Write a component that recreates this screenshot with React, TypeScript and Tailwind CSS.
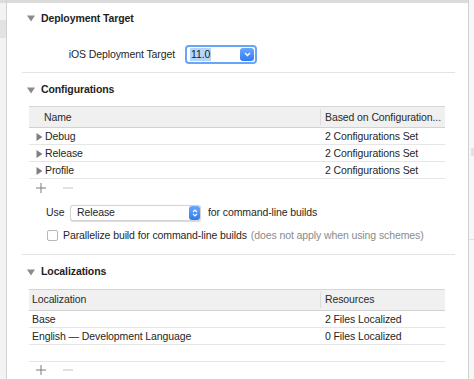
import React from "react";

const font = { fontFamily: '"Liberation Sans", Arial, sans-serif' };

function Caret({ open }: { open?: boolean }) {
  return open ? (
    <svg width="8" height="7" viewBox="0 0 8 7" className="shrink-0">
      <path d="M0 0.5h8L4 6.5z" fill="#8b8b8b" />
    </svg>
  ) : (
    <svg width="7" height="8" viewBox="0 0 7 8" className="shrink-0">
      <path d="M0.5 0v8L6.5 4z" fill="#808080" />
    </svg>
  );
}

function SectionHeader({ title, className }: { title: string; className: string }) {
  return (
    <div className={`flex items-center gap-[6px] pl-[20px] pt-[2px] ${className}`}>
      <Caret open />
      <span className="text-[10.5px] font-bold tracking-[-0.1px] text-[#1e1e1e]">{title}</span>
    </div>
  );
}

function Separator() {
  return <div className="ml-[15px] mr-[13px] h-px bg-[#e3e3e3]" />;
}

function PlusMinus({ className }: { className: string }) {
  return (
    <div className={`flex items-center gap-[17px] pl-[29px] ${className}`}>
      <svg width="10" height="10" viewBox="0 0 10 10">
        <path d="M5 0v10M0 5h10" stroke="#7a7a7a" strokeWidth="1" />
      </svg>
      <svg width="10" height="10" viewBox="0 0 10 10">
        <path d="M0 5h10" stroke="#c4c4c4" strokeWidth="1" />
      </svg>
    </div>
  );
}

function HeaderCell({ children, className }: { children: React.ReactNode; className?: string }) {
  return (
    <div className={`flex items-center overflow-hidden whitespace-nowrap pt-px text-[#2a2a2a] ${className ?? ""}`}>
      {children}
    </div>
  );
}

export default function App() {
  const configs = ["Debug", "Release", "Profile"];
  const locs = [
    ["Base", "2 Files Localized"],
    ["English \u2014 Development Language", "0 Files Localized"],
    ["", ""],
  ];

  return (
    <div
      className="flex h-[379px] w-[474px] overflow-hidden bg-white text-[10.5px] tracking-[-0.1px]"
      style={font}
    >
      {/* left strip */}
      <div className="flex w-[7px] shrink-0 flex-col border-r border-[#d2d2d2] bg-[#f3f3f3]">
        <div className="h-[3px] bg-[#dcdcdc]" />
        <div className="mt-[17px] h-[18px] bg-[#e2e2e2]" />
      </div>

      {/* main */}
      <div className="flex w-[461px] shrink-0 flex-col">
        <div className="h-[3px] bg-[#dcdcdc]" />

        <SectionHeader title="Deployment Target" className="h-[30px]" />

        <div className="mt-[13px] flex h-[19px] items-center">
          <span className="w-[178px] pr-[10px] pt-px text-right text-[#262626]">iOS Deployment Target</span>
          <div className="flex h-[19px] w-[72px] items-center rounded-[4px] border-[2px] border-[#6aa4f7] bg-white pl-[3px]">
            <span className="bg-[#b5d5fb] px-px leading-[13px] text-[#1a1a1a]">11.0</span>
            <div className="ml-auto mr-[1px] flex h-[13px] w-[14px] items-center justify-center rounded-[3px] bg-gradient-to-b from-[#69a8fb] to-[#2f7af2]">
              <svg width="7" height="5" viewBox="0 0 7 5">
                <path d="M1 1l2.5 2.5L6 1" stroke="white" strokeWidth="1.3" fill="none" />
              </svg>
            </div>
          </div>
        </div>

        <div className="mt-[8px]">
          <Separator />
        </div>

        <SectionHeader title="Configurations" className="h-[33px]" />

        {/* configurations table */}
        <div className="ml-[22px] mt-[1px] w-[416px] border-t border-[#d6d6d6]">
          <div className="flex h-[21px] border-b border-[#d2d2d2] bg-[#f0f0f0]">
            <HeaderCell className="w-[291px] pl-[15px]">Name</HeaderCell>
            <div className="my-[2px] w-px bg-[#dcdcdc]" />
            <HeaderCell className="flex-1 pl-[4px]">Based on Configuration...</HeaderCell>
          </div>
          {configs.map((c) => (
            <div key={c} className="flex h-[17px] items-center border-b border-[#e6e6e6] pt-[2px] text-[#262626]">
              <div className="flex w-[292px] items-center gap-[2px] pl-[7px]">
                <Caret />
                <span>{c}</span>
              </div>
              <span className="pl-[4px]">2 Configurations Set</span>
            </div>
          ))}
        </div>

        <PlusMinus className="h-[19px]" />

        <div className="mt-[7px] flex h-[16px] items-center text-[#262626]">
          <span className="w-[63px] pl-[39px] pt-px">Use</span>
          <div className="flex h-[16px] w-[131px] items-center rounded-[3px] border border-[#d4d4d4] bg-white pl-[6px] shadow-[0_0.5px_1px_rgba(0,0,0,0.15)]">
            <span className="pt-px">Release</span>
            <div className="ml-auto flex h-[14px] w-[11px] items-center justify-center rounded-[3px] bg-gradient-to-b from-[#69a8fb] to-[#2f7af2]">
              <svg width="6" height="10" viewBox="0 0 6 10">
                <path d="M1 4l2-2 2 2M1 6l2 2 2-2" stroke="white" strokeWidth="1.1" fill="none" />
              </svg>
            </div>
          </div>
          <span className="pl-[7px] pt-px">for command-line builds</span>
        </div>

        <div className="mt-[8px] flex h-[14px] items-center">
          <div className="ml-[40px] h-[11px] w-[11px] rounded-[2px] border border-[#b8b8b8] bg-white" />
          <span className="pl-[5px] pt-px text-[#262626]">Parallelize build for command-line builds</span>
          <span className="pl-[4px] pt-px text-[#8a8a8a]">(does not apply when using schemes)</span>
        </div>

        <div className="mt-[11px]">
          <Separator />
        </div>

        <SectionHeader title="Localizations" className="h-[34px]" />

        {/* localizations table */}
        <div className="ml-[22px] mt-px w-[416px] border-t border-[#d6d6d6]">
          <div className="flex h-[21px] border-b border-[#d2d2d2] bg-[#f0f0f0]">
            <HeaderCell className="w-[291px] pl-[3px]">Localization</HeaderCell>
            <div className="my-[2px] w-px bg-[#dcdcdc]" />
            <HeaderCell className="flex-1 pl-[4px]">Resources</HeaderCell>
          </div>
          {locs.map(([a, b], i) => (
            <div key={i} className="flex h-[17px] items-center border-b border-[#e6e6e6] pt-[2px] text-[#262626]">
              <span className="w-[292px] pl-[3px]">{a}</span>
              <span className="pl-[4px]">{b}</span>
            </div>
          ))}
        </div>

        <PlusMinus className="h-[18px]" />
      </div>

      {/* right strip */}
      <div className="flex flex-1 flex-col border-l border-[#cfcfcf] bg-[#f7f7f7]">
        <div className="ml-[2px] mt-[148px] h-[8px] w-[3px] bg-[#e0e0e0]" />
        <div className="mt-[83px] h-px bg-[#e0e0e0]" />
      </div>
    </div>
  );
}
